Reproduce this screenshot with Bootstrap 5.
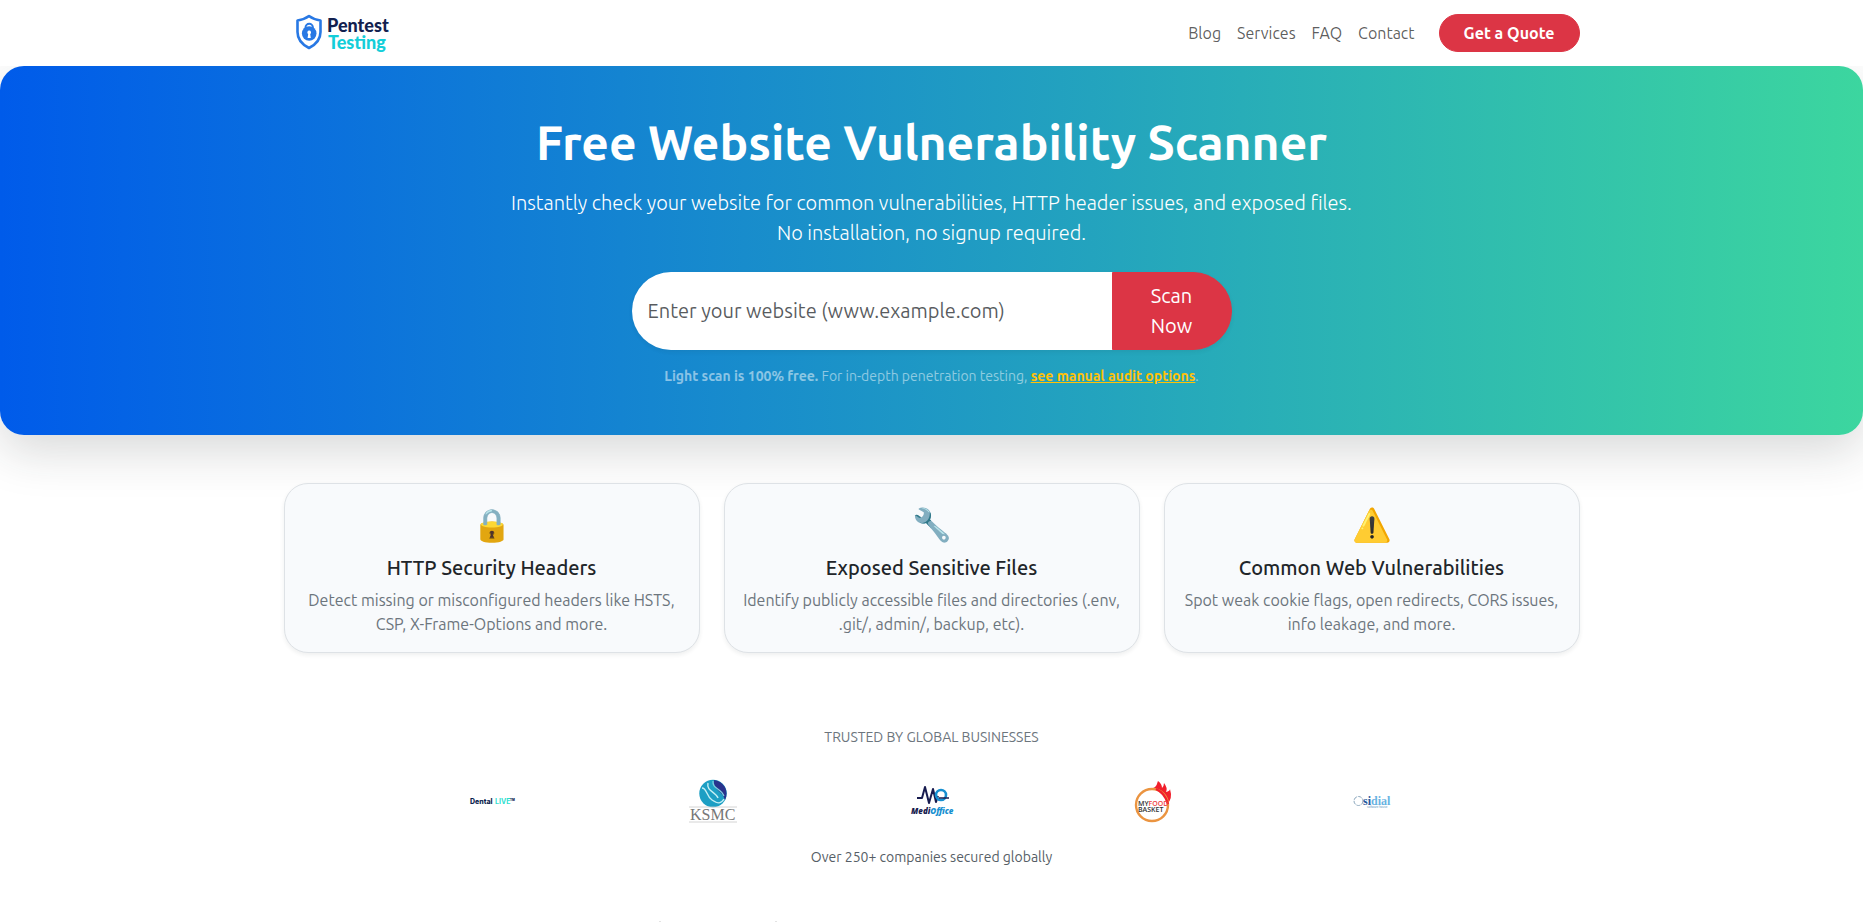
<!DOCTYPE html>
<html lang="en">
<head>
<meta charset="utf-8">
<meta name="viewport" content="width=device-width, initial-scale=1">
<title>Free Website Vulnerability Scanner</title>
<link href="https://cdn.jsdelivr.net/npm/bootstrap@5.3.0/dist/css/bootstrap.min.css" rel="stylesheet">
<style>
  body { font-family: Ubuntu, system-ui, "Noto Sans", sans-serif; overflow-x: hidden; }
  .site-nav .nav-link { color: rgba(0, 0, 0, .65); font-weight: 400; }
  .hero { background: linear-gradient(90deg, #005bea, #3cd69f); border-radius: 24px; }
  .hero h1 { font-size: 48px; }
  .scan-form { max-width: 600px; }
  .scan-form .scan-btn { width: 20%; }
  .hero-note { font-size: 14px; color: rgba(255, 255, 255, .5); }
  .feature { background: #f8fafc; border: 1px solid #dee2e6; border-radius: 24px; }
  .feature-icon { font-size: 32px; line-height: 48px; }
  .feature p, .trust-text { color: #6c757d; }
  .trust-text, .trust-note { font-size: 14px; line-height: 21px; }
  .trust-text { margin-bottom: 28px; }
  .trust { padding-top: 26px; }
  .trust-note { color: #565e66; margin: 21px 0 0; }
  .next-edge { margin-left: 29%; width: 118px; padding-top: 53px; }
  .next-edge span { width: 2px; height: 2px; background: #e3e3e3; }
</style>
</head>
<body>
<nav class="navbar navbar-expand-md site-nav bg-white py-2">
  <div class="container-xxl">
    <a class="navbar-brand p-0 m-0" href="#" aria-label="Pentest Testing">
      <svg class="d-block" width="120" height="50" viewBox="0 0 120 50">
        <path d="M25 8C21 11 17 12 13.500 12.500V24C13.500 31 18 36.500 25 40C32 36.500 36.500 31 36.500 24V12.500C33 12 29 11 25 8Z" fill="#fff" stroke="#2878e4" stroke-width="2.600" stroke-linejoin="round"/>
        <path d="M21.500 21V19.500a3.700 3.700 0 0 1 7.400 0V21" fill="none" stroke="#2878e4" stroke-width="2"/>
        <circle cx="25.200" cy="25.500" r="7.300" fill="#2878e4"/>
        <path d="M25.200 22.500a1.900 1.900 0 0 1 1 3.500l.6 4h-3.200l.6-4a1.900 1.900 0 0 1 1-3.500Z" fill="#fff"/>
        <text x="43" y="24" font-family="Lato, sans-serif" font-weight="900" font-size="18" fill="#12214f">Pentest</text>
        <text x="44" y="41" font-family="Lato, sans-serif" font-weight="900" font-size="18" fill="#14ced9">Testing</text>
      </svg>
    </a>
    <div class="d-flex flex-wrap align-items-center ms-auto">
      <ul class="nav gap-3 me-4">
        <li><a class="nav-link p-0" href="#">Blog</a></li>
        <li><a class="nav-link p-0" href="#">Services</a></li>
        <li><a class="nav-link p-0" href="#">FAQ</a></li>
        <li><a class="nav-link p-0" href="#">Contact</a></li>
      </ul>
      <a class="btn btn-danger rounded-pill fw-bold px-4" href="#">Get a Quote</a>
    </div>
  </div>
</nav>

<main>
  <section class="hero text-white text-center py-5 px-3 shadow-lg">
    <h1 class="fw-bold mb-3">Free Website Vulnerability Scanner</h1>
    <p class="lead fs-5 mb-4">Instantly check your website for common vulnerabilities, HTTP header issues, and exposed files.<br>No installation, no signup required.</p>
    <form class="scan-form mx-auto">
      <div class="input-group input-group-lg rounded-pill shadow-sm">
        <input type="text" class="form-control rounded-start-pill border-0" placeholder="Enter your website (www.example.com)" aria-label="Website address">
        <button type="button" class="btn btn-danger scan-btn rounded-end-pill px-4">Scan<br>Now</button>
      </div>
    </form>
    <p class="hero-note mt-3 mb-0"><strong>Light scan is 100% free.</strong> For in-depth penetration testing, <a class="text-warning fw-bold" href="#">see manual audit options</a>.</p>
  </section>

  <section class="container-xxl py-5">
    <div class="row g-4 text-center">
      <div class="col-md-4">
        <div class="feature h-100 p-3 shadow-sm">
          <div class="feature-icon mb-2" aria-hidden="true">🔒</div>
          <h2 class="fs-5 mb-2">HTTP Security Headers</h2>
          <p class="mb-0">Detect missing or misconfigured headers like HSTS, CSP, X-Frame-Options and more.</p>
        </div>
      </div>
      <div class="col-md-4">
        <div class="feature h-100 p-3 shadow-sm">
          <div class="feature-icon mb-2" aria-hidden="true">🔧</div>
          <h2 class="fs-5 mb-2">Exposed Sensitive Files</h2>
          <p class="mb-0">Identify publicly accessible files and directories (.env, .git/, admin/, backup, etc).</p>
        </div>
      </div>
      <div class="col-md-4">
        <div class="feature h-100 p-3 shadow-sm">
          <div class="feature-icon mb-2" aria-hidden="true">⚠️</div>
          <h2 class="fs-5 mb-2">Common Web Vulnerabilities</h2>
          <p class="mb-0">Spot weak cookie flags, open redirects, CORS issues, info leakage, and more.</p>
        </div>
      </div>
    </div>
  </section>

  <section class="trust container-xxl text-center">
    <p class="trust-text text-uppercase">Trusted by global businesses</p>
    <div class="row justify-content-center align-items-center">
      <div class="col-4 col-md-2">
        <svg width="60" height="50" viewBox="0 0 60 50" role="img" aria-label="Dental LIVE">
          <g font-family="Inter, sans-serif" font-weight="800" font-size="7">
            <text x="8" y="28" fill="#0b1f4e">Dental</text>
            <text x="33" y="28" fill="#2fe0d0" font-weight="700">LIVE</text>
            <text x="48" y="25" font-size="3" fill="#0b1f4e">TM</text>
          </g>
        </svg>
      </div>
      <div class="col-4 col-md-2">
        <svg width="60" height="50" viewBox="0 0 60 50" role="img" aria-label="KSMC">
          <circle cx="31" cy="17.500" r="13.700" fill="#1d9fc4"/>
          <path d="M32 4A13.700 13.700 0 0 1 43 24C41 15 31 15 32 4Z" fill="#29338d"/>
          <path d="M20 12C25 12 24 20 30 24S39 28 42 23M26 7C24 15 34 16 36 22" fill="none" stroke="#c5f0f5" stroke-width="1.400"/>
          <path d="M31 5C30 13 39 12 42 20" fill="none" stroke="#7fd0e0" stroke-width="1.200"/>
          <path d="M7 31H55M7 46H55" stroke="#c9c9c9" stroke-width=".8"/>
          <text x="8" y="43.500" font-family="Liberation Serif, serif" font-size="16" fill="#777">KSMC</text>
        </svg>
      </div>
      <div class="col-4 col-md-2">
        <svg width="60" height="50" viewBox="0 0 60 50" role="img" aria-label="MediOffice">
          <path d="M15 22H20L23 11L27 27L31 13L34 26L36 20" fill="none" stroke="#171b4f" stroke-width="2" stroke-linejoin="round"/>
          <circle cx="39" cy="19" r="5" fill="none" stroke="#168fd0" stroke-width="2.600"/>
          <path d="M37 22H47" stroke="#171b4f" stroke-width="1.500"/>
          <text x="9" y="38" font-family="Open Sans, sans-serif" font-style="italic" font-weight="800" font-size="8" fill="#171b4f">Medi<tspan fill="#168fd0">Office</tspan></text>
        </svg>
      </div>
      <div class="col-4 col-md-2">
        <svg width="60" height="50" viewBox="0 0 60 50" role="img" aria-label="My Food Basket">
          <path d="M31 12C35 11 35 7 36 5Q40 8 40 12Q42 10 42 7Q46 12 44 16Q48 15 48 13Q51 23 45 28Q44 17 31 12Z" fill="#f11f2b"/>
          <circle cx="30" cy="29" r="16" fill="#fff" stroke="#eb9440" stroke-width="2.400"/>
          <path d="M34 13Q43 17 46 28" fill="none" stroke="#f11f2b" stroke-width="2.400"/>
          <g font-family="Open Sans, sans-serif" font-size="7" font-weight="600">
            <text x="16" y="30" fill="#333">MY<tspan fill="#ef4444">FOOD</tspan></text>
            <text x="16" y="36" fill="#333">BASKET</text>
          </g>
        </svg>
      </div>
      <div class="col-4 col-md-2">
        <svg width="60" height="50" viewBox="0 0 60 50" role="img" aria-label="sidial">
          <circle cx="16.500" cy="25" r="4.500" fill="none" stroke="#8ba7bd" stroke-dasharray="4 1"/>
          <text x="21" y="29" font-family="Liberation Serif, serif" font-weight="700" font-size="12" fill="#26599e">si<tspan fill="#68b3e2">dial</tspan></text>
          <text x="25" y="32" font-family="Liberation Sans, sans-serif" font-size="3" fill="#6696c0">software house</text>
        </svg>
      </div>
    </div>
    <p class="trust-note">Over 250+ companies secured globally</p>
    <div class="next-edge d-flex justify-content-between" aria-hidden="true"><span></span><span></span></div>
  </section>
</main>
<script src="https://cdn.jsdelivr.net/npm/bootstrap@5.3.0/dist/js/bootstrap.bundle.min.js"></script>
</body>
</html>
